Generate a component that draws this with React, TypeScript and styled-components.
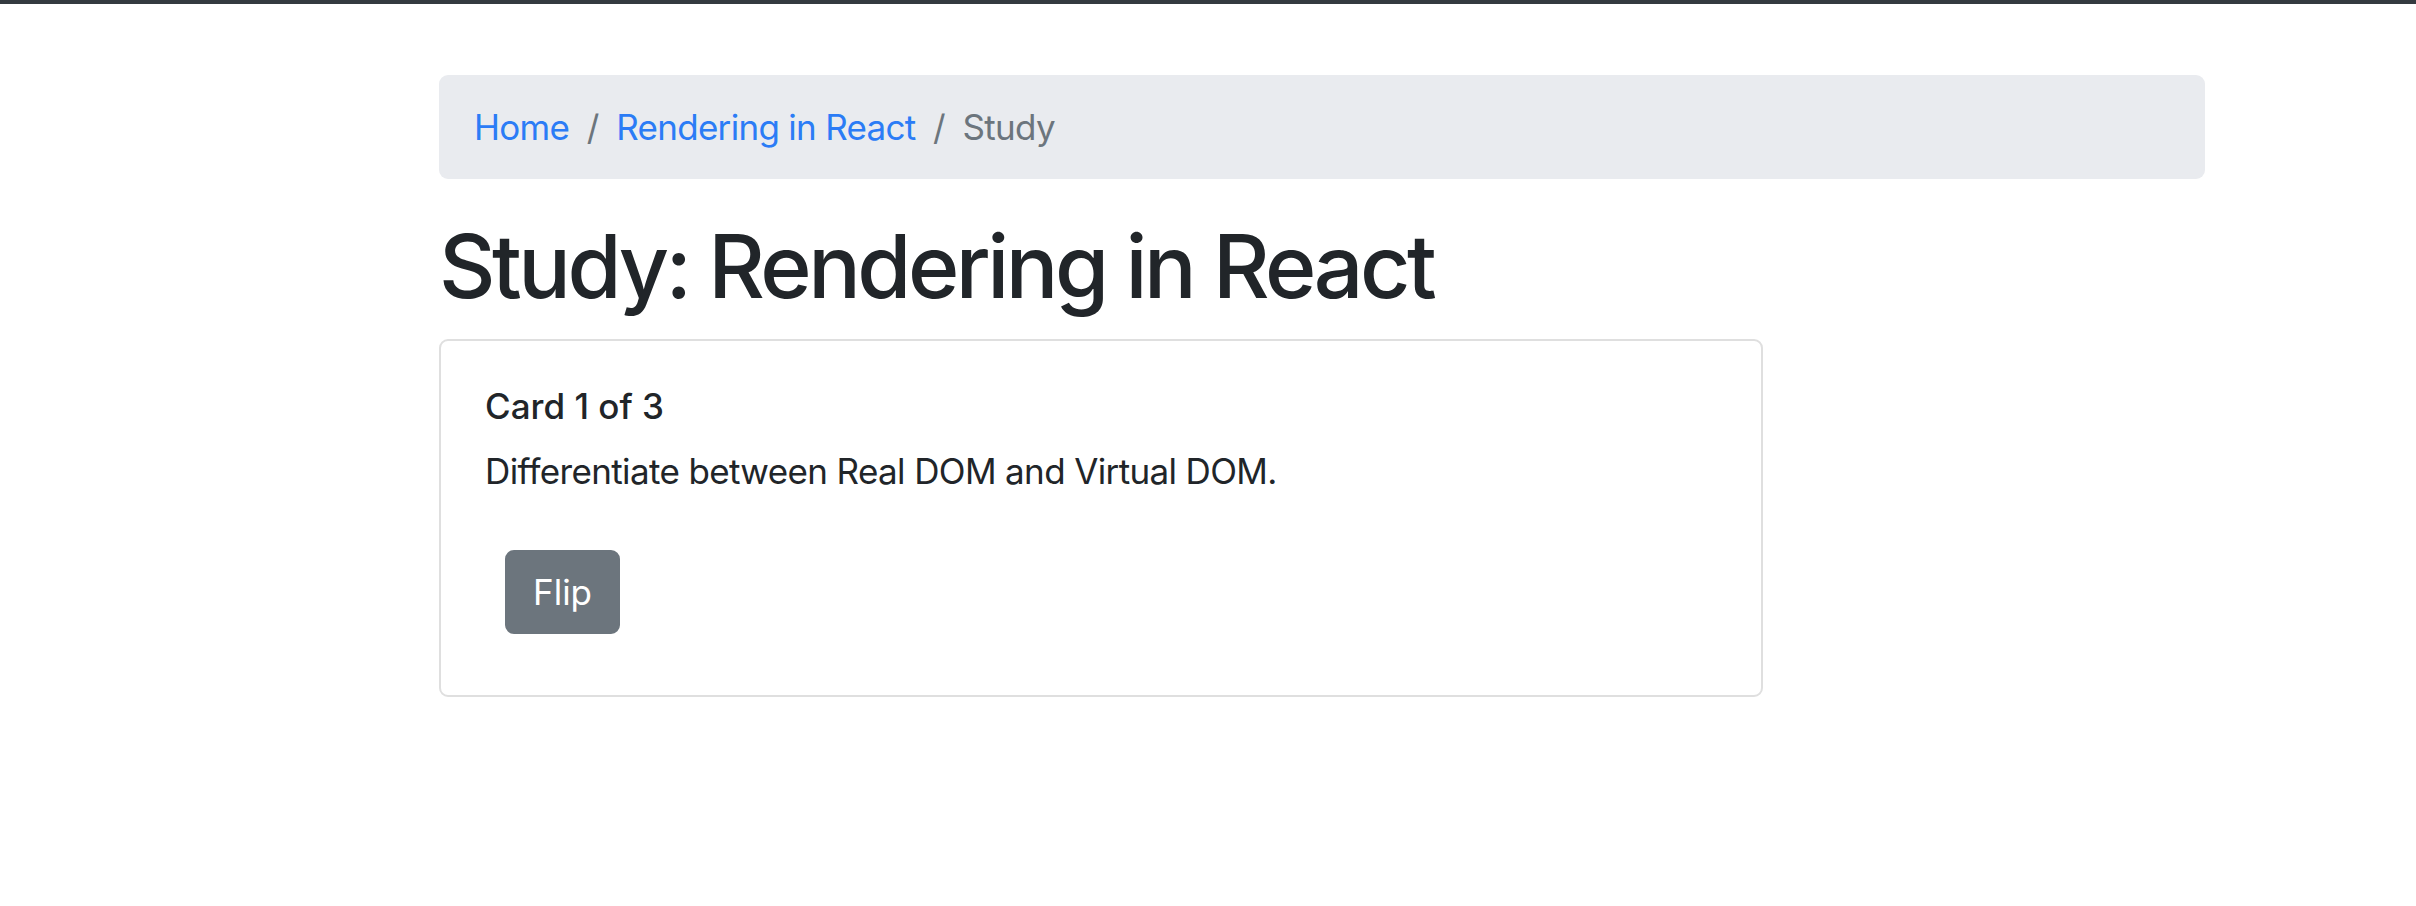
import React from "react";
import styled, { createGlobalStyle } from "styled-components";

const GlobalStyle = createGlobalStyle`
  html, body {
    margin: 0;
    padding: 0;
    background: #ffffff;
  }
  body {
    font-family: Inter, "Liberation Sans", Arial, sans-serif;
    color: #212529;
    -webkit-font-smoothing: antialiased;
  }
  * { box-sizing: border-box; }
`;

const TopBar = styled.div`
  height: 4px;
  background: #343a40;
`;

const Page = styled.main`
  padding: 71px 0 0 439px;
`;

const Container = styled.div`
  width: 1766px;
`;

const Crumbs = styled.ol`
  display: flex;
  align-items: center;
  list-style: none;
  margin: 0 0 35px;
  padding: 26px 35px;
  background: #e9ebef;
  border-radius: 9px;
  font-size: 35px;
  line-height: 52px;
  letter-spacing: -0.02em;
`;

const Crumb = styled.li<{ $first?: boolean; $active?: boolean }>`
  display: flex;
  color: ${(p) => (p.$active ? "#6c757d" : "#2b7cf6")};
  ${(p) =>
    !p.$first &&
    `
    &::before {
      content: "/";
      color: #6c757d;
      padding: 0 17.5px;
    }
  `}
`;

const CrumbLink = styled.a`
  color: #2b7cf6;
  text-decoration: none;
`;

const Title = styled.h1`
  margin: 0 0 20px;
  font-size: 87.5px;
  font-weight: 500;
  line-height: 105px;
  letter-spacing: -0.04em;
  color: #212529;
`;

const Card = styled.section`
  width: 1324px;
  border: 2px solid #dfdfdf;
  border-radius: 9px;
  background: #fff;
`;

const CardBody = styled.div`
  padding: 44px;
`;

const CardTitle = styled.h5`
  margin: 0 0 17.5px;
  font-size: 35px;
  font-weight: 500;
  line-height: 42px;
`;

const CardText = styled.p`
  margin: 0 0 35px;
  font-size: 35px;
  line-height: 52.5px;
  letter-spacing: -0.018em;
`;

const FlipButton = styled.button`
  display: inline-block;
  margin: 17.5px 20px;
  padding: 14px 26px;
  font-family: inherit;
  font-size: 35px;
  line-height: 52px;
  color: #fff;
  background: #6c757d;
  border: 2px solid #6c757d;
  border-radius: 9px;
  cursor: pointer;
`;

export default function App() {
  return (
    <>
      <GlobalStyle />
      <TopBar />
      <Page>
        <Container>
          <nav aria-label="breadcrumb">
            <Crumbs>
              <Crumb $first>
                <CrumbLink href="#">Home</CrumbLink>
              </Crumb>
              <Crumb>
                <CrumbLink href="#">Rendering in React</CrumbLink>
              </Crumb>
              <Crumb $active>Study</Crumb>
            </Crumbs>
          </nav>
          <Title>Study: Rendering in React</Title>
          <Card>
            <CardBody>
              <CardTitle>Card 1 of 3</CardTitle>
              <CardText>Differentiate between Real DOM and Virtual DOM.</CardText>
              <FlipButton type="button">Flip</FlipButton>
            </CardBody>
          </Card>
        </Container>
      </Page>
    </>
  );
}
